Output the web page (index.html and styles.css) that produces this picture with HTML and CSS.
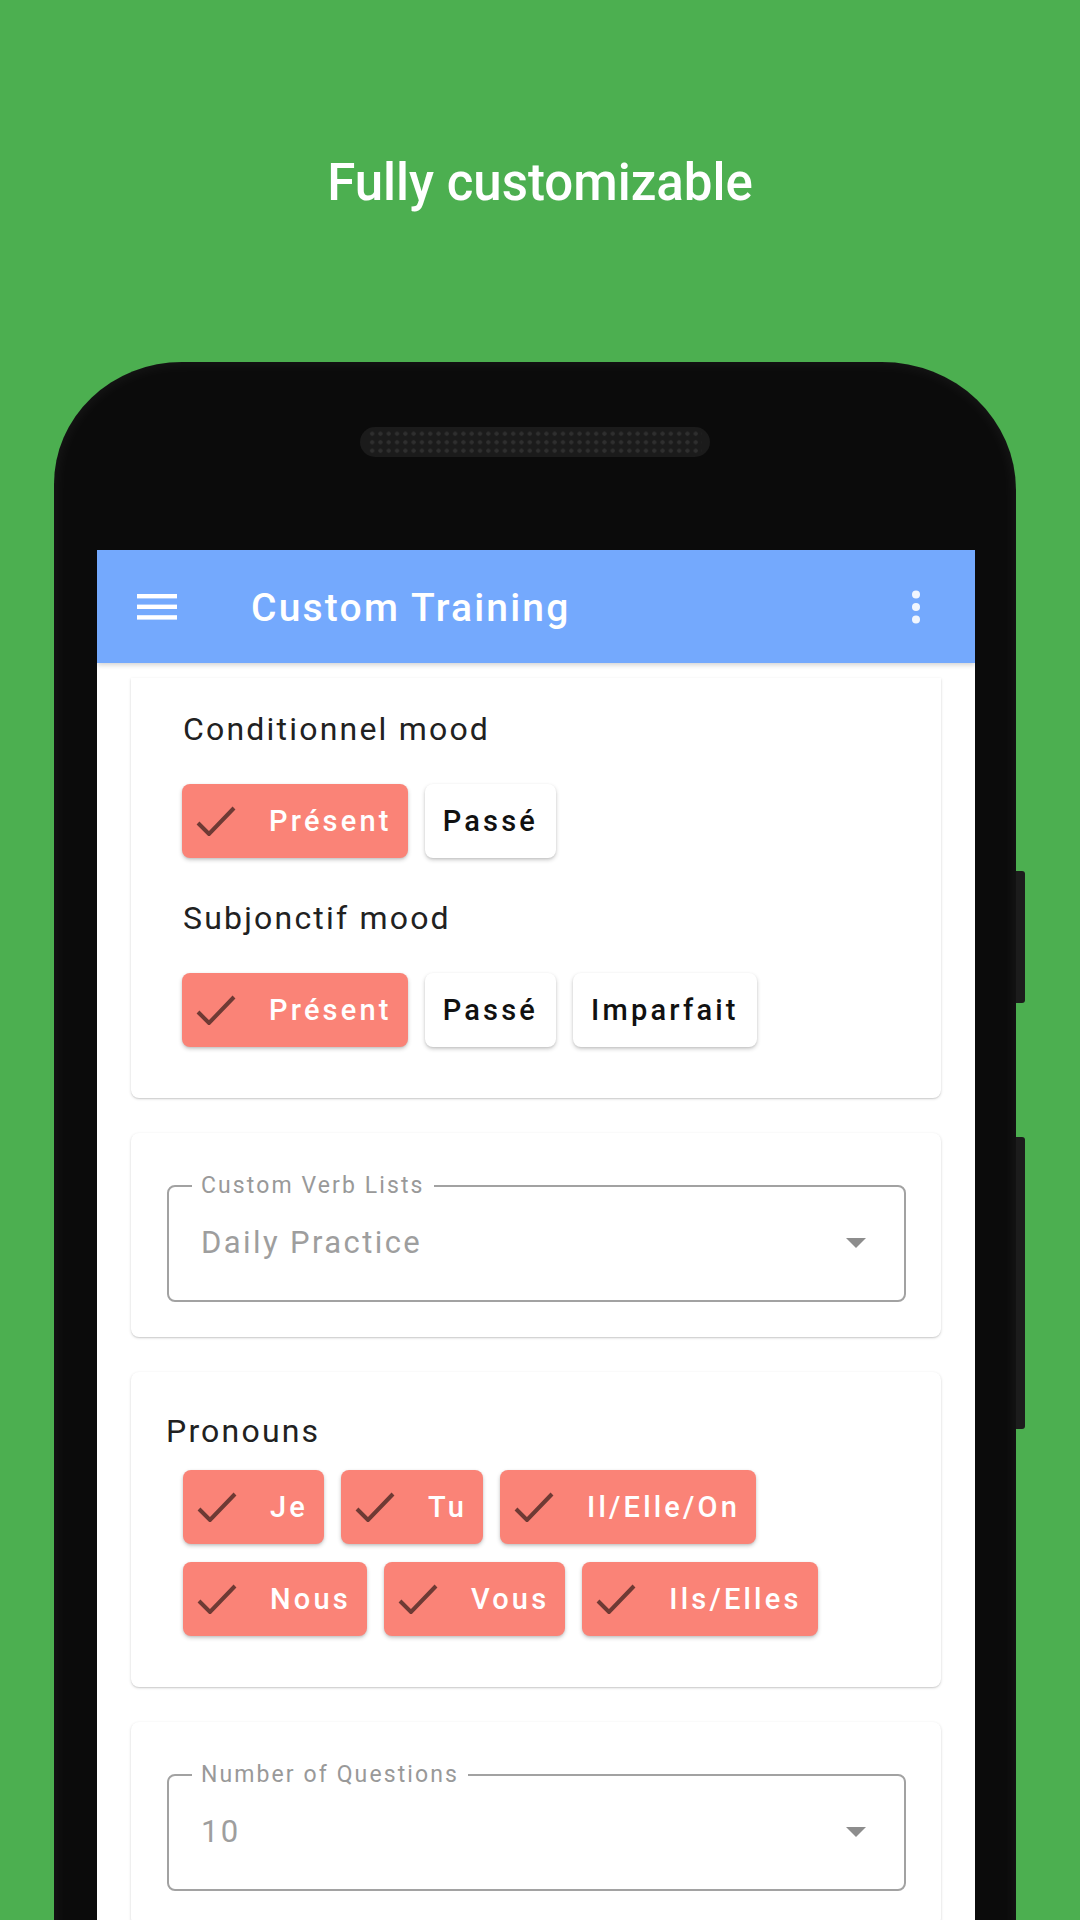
FILE: index.html
```html
<!DOCTYPE html>
<html lang="en">
<head>
<meta charset="utf-8">
<title>Custom Training</title>
<link rel="stylesheet" href="styles.css">
</head>
<body>
<div class="page">
  <h1 class="headline">Fully customizable</h1>

  <div class="phone">
    <span class="side-key side-key-power"></span>
    <span class="side-key side-key-volume"></span>

    <div class="speaker"><div class="speaker-holes"></div></div>

    <div class="screen">
      <header class="appbar">
        <svg class="appbar-menu" width="40" height="26" viewBox="0 0 40 26">
          <rect x="0" y="0" width="40" height="4.4" fill="#fff"/>
          <rect x="0" y="10.6" width="40" height="4.4" fill="#fff"/>
          <rect x="0" y="21.2" width="40" height="4.4" fill="#fff"/>
        </svg>
        <span class="appbar-title">Custom Training</span>
        <svg class="appbar-more" width="10" height="34" viewBox="0 0 10 34">
          <circle cx="5" cy="4.5" r="4" fill="#fff"/>
          <circle cx="5" cy="17" r="4" fill="#fff"/>
          <circle cx="5" cy="29.5" r="4" fill="#fff"/>
        </svg>
      </header>

      <main class="content">
        <section class="card card-moods">
          <div class="mood">
            <h2 class="group-title">Conditionnel mood</h2>
            <div class="chips">
              <button class="chip chip-on"><svg class="check" width="40" height="30" viewBox="0 0 40 30"><path d="M2 17 L13 28 L38 2"/></svg><span>Présent</span></button>
              <button class="chip">Passé</button>
            </div>
          </div>
          <div class="mood">
            <h2 class="group-title">Subjonctif mood</h2>
            <div class="chips">
              <button class="chip chip-on"><svg class="check" width="40" height="30" viewBox="0 0 40 30"><path d="M2 17 L13 28 L38 2"/></svg><span>Présent</span></button>
              <button class="chip">Passé</button>
              <button class="chip">Imparfait</button>
            </div>
          </div>
        </section>

        <section class="card card-field">
          <fieldset class="select">
            <legend>Custom Verb Lists</legend>
            <div class="select-row">
              <span class="select-value">Daily Practice</span>
              <svg class="caret" width="20" height="10" viewBox="0 0 20 10"><polygon points="0,0 20,0 10,10"/></svg>
            </div>
          </fieldset>
        </section>

        <section class="card card-pronouns">
          <h2 class="group-title">Pronouns</h2>
          <div class="chips chips-wrap">
            <button class="chip chip-on"><svg class="check" width="40" height="30" viewBox="0 0 40 30"><path d="M2 17 L13 28 L38 2"/></svg><span>Je</span></button>
            <button class="chip chip-on"><svg class="check" width="40" height="30" viewBox="0 0 40 30"><path d="M2 17 L13 28 L38 2"/></svg><span>Tu</span></button>
            <button class="chip chip-on"><svg class="check" width="40" height="30" viewBox="0 0 40 30"><path d="M2 17 L13 28 L38 2"/></svg><span>Il/Elle/On</span></button>
            <button class="chip chip-on"><svg class="check" width="40" height="30" viewBox="0 0 40 30"><path d="M2 17 L13 28 L38 2"/></svg><span>Nous</span></button>
            <button class="chip chip-on"><svg class="check" width="40" height="30" viewBox="0 0 40 30"><path d="M2 17 L13 28 L38 2"/></svg><span>Vous</span></button>
            <button class="chip chip-on"><svg class="check" width="40" height="30" viewBox="0 0 40 30"><path d="M2 17 L13 28 L38 2"/></svg><span>Ils/Elles</span></button>
          </div>
        </section>

        <section class="card card-field">
          <fieldset class="select">
            <legend>Number of Questions</legend>
            <div class="select-row">
              <span class="select-value">10</span>
              <svg class="caret" width="20" height="10" viewBox="0 0 20 10"><polygon points="0,0 20,0 10,10"/></svg>
            </div>
          </fieldset>
        </section>
      </main>
    </div>
  </div>
</div>
</body>
</html>
```

FILE: styles.css
```css
* {
  box-sizing: border-box;
}

html,
body {
  margin: 0;
  padding: 0;
}

body {
  font-family: "Roboto", "Noto Sans", "Liberation Sans", sans-serif;
  background: #4caf50;
}

.page {
  width: 1080px;
  height: 1920px;
  overflow: hidden;
  background: #4caf50;
  padding-top: 152px;
}

/* Headline above the device */
.headline {
  margin: 0;
  text-align: center;
  color: #fff;
  font-size: 51px;
  line-height: 62px;
  font-weight: 500;
  letter-spacing: 0;
}

/* Device frame */
.phone {
  position: relative;
  width: 962px;
  height: 1620px;
  margin: 148px 0 0 54px;
  padding-top: 65px;
  background: #0b0b0b;
  border-radius: 128px 134px 0 0 / 122px 128px 0 0;
  box-shadow: inset 0 0 14px 2px rgba(255, 255, 255, 0.06);
}

.side-key {
  position: absolute;
  left: 100%;
  width: 9px;
  background: #1c1c1c;
  border-radius: 0 3px 3px 0;
}

.side-key-power {
  top: 509px;
  height: 132px;
}

.side-key-volume {
  top: 775px;
  height: 292px;
}

.speaker {
  width: 350px;
  height: 30px;
  margin: 0 auto;
  padding: 3px 8px;
  background: #1b1b1b;
  border-radius: 15px;
}

.speaker-holes {
  height: 24px;
  background-image: radial-gradient(circle, #2f2f2f 1.8px, transparent 2.3px);
  background-size: 8.3px 8.5px;
  background-position: 0 -0.5px;
}

.screen {
  width: 878px;
  height: 1500px;
  margin: 93px 0 0 43px;
  background: #ffffff;
  overflow: hidden;
}

/* Toolbar */
.appbar {
  position: relative;
  z-index: 1;
  height: 113px;
  display: flex;
  align-items: center;
  padding: 0 54px 0 40px;
  background: #74a9fd;
  box-shadow: 0 2px 5px rgba(0, 0, 0, 0.18);
}

.appbar-menu {
  display: block;
  flex: none;
}

.appbar-title {
  flex: 1;
  margin-left: 74px;
  color: #fff;
  font-size: 39px;
  font-weight: 500;
  letter-spacing: 2.2px;
  line-height: 44px;
  padding-top: 2px;
}

.appbar-more {
  display: block;
  flex: none;
  opacity: 0.9;
}

/* Scrolling content */
.content {
  display: flex;
  flex-direction: column;
  gap: 35px;
  padding: 15px 34px 0;
}

.card {
  background: #fff;
  border-radius: 8px;
  box-shadow: 0 1px 3px rgba(0, 0, 0, 0.16), 0 1px 1px rgba(0, 0, 0, 0.08);
}

.card-moods {
  padding: 31px 36px 51px 52px;
  border-top-left-radius: 0;
  border-top-right-radius: 0;
}

.mood + .mood {
  margin-top: 40px;
}

.group-title {
  margin: 0 0 35px;
  font-size: 32px;
  line-height: 40px;
  font-weight: 400;
  color: #212121;
  letter-spacing: 2.2px;
}

.chips {
  display: flex;
  gap: 17px;
  margin-left: -1px;
}

.chips-wrap {
  flex-wrap: wrap;
  row-gap: 18px;
  margin-left: 15px;
}

.chip {
  display: flex;
  align-items: center;
  height: 74px;
  margin: 0;
  padding: 0 18px;
  border: 0;
  border-radius: 8px;
  background: #fff;
  color: #111;
  font-family: "Roboto", "Noto Sans", "Liberation Sans", sans-serif;
  font-size: 29px;
  font-weight: 500;
  letter-spacing: 3.2px;
  box-shadow: 0 2px 4px rgba(0, 0, 0, 0.2), 0 1px 2px rgba(0, 0, 0, 0.08);
}

.chip-on {
  background: #fa8377;
  color: #fff;
  padding: 0 16px 0 14px;
}

.check {
  display: block;
  margin-right: 33px;
  fill: none;
  stroke: #6e3a34;
  stroke-width: 4;
}

/* Card with the outlined select field */
.card-field {
  padding: 39px 35px 35px 36px;
}

.card-pronouns {
  padding: 39px 36px 51px 35px;
}

.card-pronouns .group-title {
  margin-bottom: 19px;
}

.card-pronouns .chips-wrap {
  margin-left: 17px;
}

.select {
  margin: 0;
  min-width: 0;
  padding: 23px 38px 37px 23px;
  border: 2px solid #a2a2a2;
  border-radius: 8px;
}

.select legend {
  padding: 0 9px;
  font-size: 23px;
  line-height: 28px;
  color: #999;
  letter-spacing: 2.1px;
}

.select-row {
  display: flex;
  align-items: center;
}

.select-value {
  flex: 1;
  margin-left: 9px;
  font-size: 31px;
  line-height: 40px;
  color: #9e9e9e;
  letter-spacing: 2.4px;
}

.caret {
  display: block;
  fill: #8d8d8d;
}
```
